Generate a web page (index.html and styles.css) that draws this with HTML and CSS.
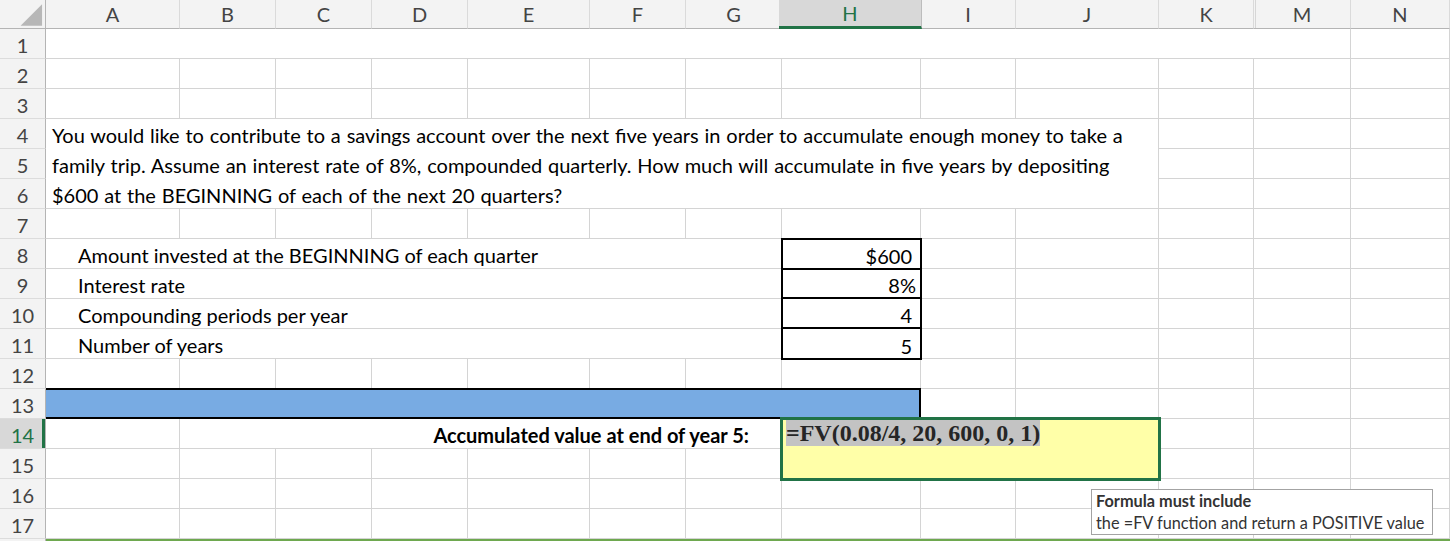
FILE: index.html
```html
<!DOCTYPE html>
<html lang="en">

<head>
    <meta charset="UTF-8">
    <title>Future Value - Annuity Due</title>
    <link rel="stylesheet" href="styles.css">
</head>

<body>
    <div class="sheet">
        <!-- Column headers -->
        <div class="hd corner">
            <svg width="46" height="29" viewBox="0 0 46 29"><polygon points="21,26 43,26 43,4" fill="#b7b7b7" /></svg>
        </div>
        <div class="hd">A</div>
        <div class="hd">B</div>
        <div class="hd">C</div>
        <div class="hd">D</div>
        <div class="hd">E</div>
        <div class="hd">F</div>
        <div class="hd">G</div>
        <div class="hd sel">H</div>
        <div class="hd">I</div>
        <div class="hd">J</div>
        <div class="hd">K</div>
        <div class="hd after-hidden">M</div>
        <div class="hd">N</div>

        <!-- Row 1 -->
        <div class="rh">1</div>
        <div class="c title"></div>
        <div class="c"></div>

        <!-- Row 2 -->
        <div class="rh">2</div>
        <div class="c"></div><div class="c"></div><div class="c"></div><div class="c"></div>
        <div class="c"></div><div class="c"></div><div class="c"></div><div class="c"></div>
        <div class="c"></div><div class="c"></div><div class="c"></div><div class="c"></div>
        <div class="c"></div>

        <!-- Row 3 -->
        <div class="rh">3</div>
        <div class="c"></div><div class="c"></div><div class="c"></div><div class="c"></div>
        <div class="c"></div><div class="c"></div><div class="c"></div><div class="c"></div>
        <div class="c"></div><div class="c"></div><div class="c"></div><div class="c"></div>
        <div class="c"></div>

        <!-- Rows 4-6: question -->
        <div class="rh">4</div>
        <div class="c intro">You would like to contribute to a savings account over the next five years in order to accumulate enough money to take a<br>family trip. Assume an interest rate of 8%, compounded quarterly. How much will accumulate in five years by depositing<br>$600 at the BEGINNING of each of the next 20 quarters?</div>
        <div class="c"></div><div class="c"></div><div class="c"></div>

        <div class="rh">5</div>
        <div class="c"></div><div class="c"></div><div class="c"></div>

        <div class="rh">6</div>
        <div class="c"></div><div class="c"></div><div class="c"></div>

        <!-- Row 7 -->
        <div class="rh">7</div>
        <div class="c"></div><div class="c"></div><div class="c"></div><div class="c"></div>
        <div class="c"></div><div class="c"></div><div class="c"></div><div class="c"></div>
        <div class="c"></div><div class="c"></div><div class="c"></div><div class="c"></div>
        <div class="c"></div>

        <!-- Inputs box H8:H11 -->
        <div class="inputs">
            <div class="val">$600</div>
            <div class="val pct">8%</div>
            <div class="val">4</div>
            <div class="val">5</div>
        </div>

        <!-- Rows 8-11: input labels (A:G merged) -->
        <div class="rh">8</div>
        <div class="c lbl">Amount invested at the BEGINNING of each quarter</div>
        <div class="c"></div><div class="c"></div><div class="c"></div><div class="c"></div><div class="c"></div>

        <div class="rh">9</div>
        <div class="c lbl">Interest rate</div>
        <div class="c"></div><div class="c"></div><div class="c"></div><div class="c"></div><div class="c"></div>

        <div class="rh">10</div>
        <div class="c lbl">Compounding periods per year</div>
        <div class="c"></div><div class="c"></div><div class="c"></div><div class="c"></div><div class="c"></div>

        <div class="rh">11</div>
        <div class="c lbl">Number of years</div>
        <div class="c"></div><div class="c"></div><div class="c"></div><div class="c"></div><div class="c"></div>

        <!-- Row 12 -->
        <div class="rh">12</div>
        <div class="c"></div><div class="c"></div><div class="c"></div><div class="c"></div>
        <div class="c"></div><div class="c"></div><div class="c"></div><div class="c"></div>
        <div class="c"></div><div class="c"></div><div class="c"></div><div class="c"></div>
        <div class="c"></div>

        <!-- Row 13 -->
        <div class="rh">13</div>
        <div class="c band"></div>
        <div class="c"></div><div class="c"></div><div class="c"></div><div class="c"></div><div class="c"></div>

        <!-- Row 14 -->
        <div class="rh sel">14</div>
        <div class="c"></div>
        <div class="c result-label">Accumulated value at end of year 5:</div>
        <div class="answer"><span>=FV(0.08/4, 20, 600, 0, 1)</span></div>
        <div class="c"></div><div class="c"></div><div class="c"></div>

        <!-- Row 15 -->
        <div class="rh">15</div>
        <div class="c"></div><div class="c"></div><div class="c"></div><div class="c"></div>
        <div class="c"></div><div class="c"></div><div class="c"></div>
        <div class="c"></div><div class="c"></div><div class="c"></div>

        <!-- Row 16 -->
        <div class="rh">16</div>
        <div class="c"></div><div class="c"></div><div class="c"></div><div class="c"></div>
        <div class="c"></div><div class="c"></div><div class="c"></div><div class="c"></div>
        <div class="c"></div><div class="c"></div><div class="c"></div><div class="c"></div>
        <div class="c"></div>

        <!-- Row 17 -->
        <div class="rh">17</div>
        <div class="c"></div><div class="c"></div><div class="c"></div><div class="c"></div>
        <div class="c"></div><div class="c"></div><div class="c"></div><div class="c"></div>
        <div class="c"></div><div class="c"></div><div class="c"></div><div class="c"></div>
        <div class="c"></div>

        <div class="rh-end"></div>
        <div class="tabline"></div>

        <!-- Cell comment -->
        <div class="note">
            <b>Formula must include</b><br>
            the =FV function and return a POSITIVE value
        </div>
    </div>
</body>

</html>
```

FILE: styles.css
```css
/* Global Styles */
* {
    margin: 0;
    padding: 0;
    box-sizing: border-box;
}

body {
    background-color: #fff;
    color: #000;
    font-family: Lato, "Liberation Sans", sans-serif;
    overflow: hidden;
}

/* Sheet grid */
.sheet {
    position: relative;
    display: grid;
    grid-template-columns: 46px 134px 96px 96px 96px 122px 96px 96px 139px 95px 143px 95px 97px 99px;
    grid-template-rows: 29px repeat(17, 30px) 2px;
    width: 1450px;
}

.c {
    border-right: 1px solid #d4d4d4;
    border-bottom: 1px solid #d4d4d4;
    display: flex;
    align-items: flex-end;
    padding: 0 5px 1px;
    font-size: 20px;
    line-height: 24px;
    white-space: nowrap;
}

/* Headers */
.hd {
    background-color: #f3f3f3;
    color: #444;
    font-size: 20px;
    display: flex;
    align-items: center;
    justify-content: center;
    border-right: 1px solid #dadada;
    border-bottom: 1px solid #b4b4b4;
}

.hd.sel {
    background-color: #d8d8d8;
    color: #217346;
    border-bottom: 3px solid #217346;
    border-right-color: #bcbcbc;
    margin: 0 -1px 0 -3px;
    z-index: 1;
}

.hd.after-hidden {
    box-shadow: inset 1px 0 0 #f3f3f3, inset 2px 0 0 #d6d6d6;
}

.corner {
    border-right-color: #b4b4b4;
}

.rh {
    background-color: #f3f3f3;
    color: #444;
    font-size: 20px;
    line-height: 24px;
    display: flex;
    align-items: flex-end;
    justify-content: center;
    padding-bottom: 1px;
    border-right: 1px solid #b4b4b4;
    border-bottom: 1px solid #dcdcdc;
}

.rh.sel {
    background-color: #d8d8d8;
    color: #217346;
    box-shadow: inset -3px 0 0 #217346;
}

.rh-end {
    background-color: #f3f3f3;
    border-right: 1px solid #b4b4b4;
}

.tabline {
    grid-column: 2 / 15;
    background-color: #6ea84f;
}

/* Merged areas */
.title {
    grid-column: 2 / 14;
    grid-row: 2;
}

.intro {
    grid-column: 2 / 12;
    grid-row: 5 / 8;
    display: block;
    white-space: nowrap;
    line-height: 30px;
    word-spacing: 0.7px;
    padding: 1px 6px 0;
}

.lbl {
    grid-column: 2 / 9;
    padding-left: 32px;
}

/* Input values */
.inputs {
    grid-column: 9;
    grid-row: 9 / 13;
    display: grid;
    grid-template-rows: repeat(4, 1fr);
    border: 2px solid #000;
    margin: -1px -1px -1px -1px;
    z-index: 1;
    background-color: #fff;
}

.val {
    border-bottom: 2px solid #000;
    display: flex;
    align-items: flex-end;
    justify-content: flex-end;
    font-size: 20px;
    line-height: 24px;
    padding: 0 8px 0 0;
}

.val:last-child {
    border-bottom: none;
}

.val.pct {
    padding-right: 4px;
}

/* Result rows */
.band {
    grid-column: 2 / 10;
    background-color: #78abe3;
    border-top: 2px solid #000;
    border-bottom: 2px solid #000;
    border-right: 2px solid #000;
    margin-top: -1px;
}

.result-label {
    grid-column: 3 / 9;
    justify-content: flex-end;
    font-weight: bold;
    padding-right: 32px;
}

.answer {
    grid-column: 9 / 12;
    grid-row: 15 / 17;
    background-color: #ffffa8;
    outline: 3px solid #217346;
    outline-offset: -1px;
    z-index: 2;
    padding: 1px 4px 0;
    font-family: "Liberation Serif", "Times New Roman", serif;
    font-weight: bold;
    font-size: 24px;
    color: #262626;
    white-space: nowrap;
}

.answer span {
    background-color: #c3c3c3;
}

/* Comment */
.note {
    position: absolute;
    left: 1091px;
    top: 489px;
    width: 342px;
    height: 46px;
    border: 1px solid #a3a3a3;
    background-color: #fff;
    padding: 0 4px;
    font-size: 16.3px;
    line-height: 22px;
    color: #333;
    z-index: 3;
    white-space: nowrap;
}
```
